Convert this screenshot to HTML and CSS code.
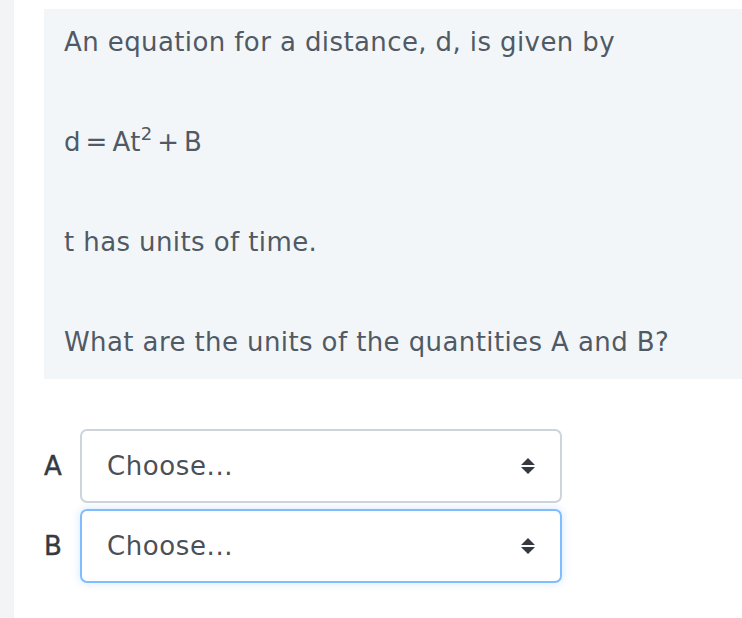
FILE: index.html
```
<!DOCTYPE html>
<html>
<head>
<meta charset="utf-8">
<link rel="stylesheet" href="styles.css">
</head>
<body>
<div class="page">
  <div class="strip"></div>
  <main class="content">
    <section class="panel">
      <p>An equation for a distance, d, is given by</p>
      <p class="eq">d = At<sup>2</sup> + B</p>
      <p>t has units of time.</p>
      <p>What are the units of the quantities A and B?</p>
    </section>
    <div class="answers">
      <div class="row">
        <span class="label">A</span>
        <div class="select">
          <span>Choose...</span>
          <svg class="arrows" width="16" height="18" viewBox="0 0 16 18"><path d="M1 8 L8 1 L15 8 Z M1 10 L15 10 L8 17 Z" fill="#343a40"/></svg>
        </div>
      </div>
      <div class="row">
        <span class="label">B</span>
        <div class="select focus">
          <span>Choose...</span>
          <svg class="arrows" width="16" height="18" viewBox="0 0 16 18"><path d="M1 8 L8 1 L15 8 Z M1 10 L15 10 L8 17 Z" fill="#343a40"/></svg>
        </div>
      </div>
    </div>
  </main>
</div>
</body>
</html>
```
FILE: styles.css
```
html, body {
  margin: 0;
  padding: 0;
  background: #ffffff;
}
.page {
  display: flex;
  min-height: 618px;
  font-family: "DejaVu Sans", "Open Sans", sans-serif;
}
.strip {
  width: 14px;
  background: #f3f4f6;
  flex: none;
}
.content {
  flex: 1;
  padding-left: 30px;
  padding-top: 9px;
}
.panel {
  background: #f3f6f9;
  padding: 14px 20px 17px;
  color: #505a64;
  font-size: 26px;
  letter-spacing: 0.4px;
}
.panel p {
  margin: 0 0 61px;
  line-height: 39px;
}
.panel p:last-child {
  margin-bottom: 0;
}
.panel .eq {
  word-spacing: -4px;
}
.panel sup {
  font-size: 18px;
  line-height: 0;
  vertical-align: 11px;
}
.answers {
  margin-top: 50px;
  display: flex;
  flex-direction: column;
  gap: 6px;
}
.row {
  display: flex;
  align-items: center;
}
.label {
  width: 36px;
  font-size: 26px;
  color: #343a40;
  -webkit-text-stroke: 0.4px #343a40;
}
.select {
  width: 482px;
  height: 74px;
  box-sizing: border-box;
  border: 2px solid #ced4da;
  border-radius: 7px;
  display: flex;
  align-items: center;
  justify-content: space-between;
  padding: 0 24px 0 25px;
  font-size: 26px;
  letter-spacing: 0.6px;
  color: #495057;
  background: #fff;
}
.select.focus {
  border-color: #80bdff;
  box-shadow: 0 0 10px rgba(0, 123, 255, 0.18);
}
.arrows {
  display: block;
}
```
